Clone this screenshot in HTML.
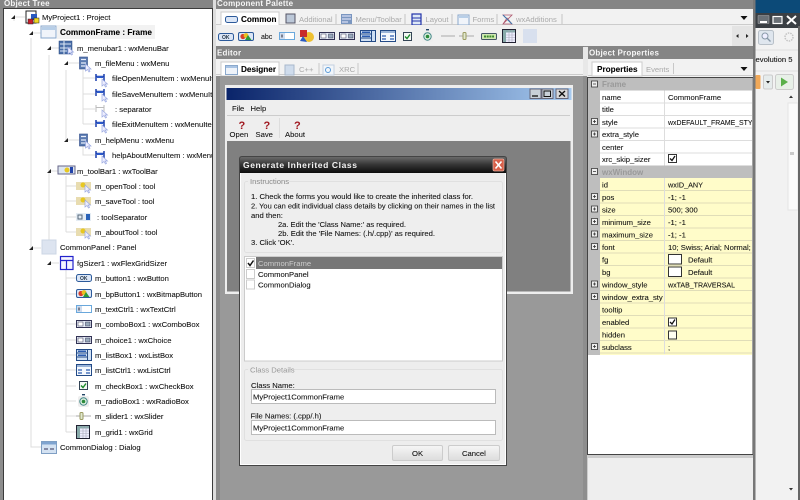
<!DOCTYPE html>
<html><head><meta charset="utf-8"><style>
html,body{margin:0;padding:0;background:#8c8c8c}
svg{display:block;position:absolute;left:0;top:0;filter:blur(.28px)}
text{font-family:"Liberation Sans",sans-serif;font-size:7.65px;fill:#111;stroke:#111;stroke-width:.08px;white-space:pre}
.b{font-weight:bold;font-size:8.2px;fill:#000}
.w{font-weight:bold;font-size:8px;fill:#f6f6f6;stroke:none;letter-spacing:.2px}
.g{fill:#aaa;stroke:none}
.v{font-weight:bold;fill:#999;stroke:none;font-size:8px}
</style></head><body>
<svg width="800" height="500" viewBox="0 0 800 500" xmlns="http://www.w3.org/2000/svg">
<defs>
<linearGradient id="tb"><stop offset="0" stop-color="#0a246a"/><stop offset="1" stop-color="#a6caf0"/></linearGradient>
<linearGradient id="dt" x2="0" y2="1"><stop offset="0" stop-color="#6a6a6a"/><stop offset=".5" stop-color="#333"/><stop offset="1" stop-color="#0c0c0c"/></linearGradient>
<linearGradient id="btn" x2="0" y2="1"><stop offset="0" stop-color="#f6f6f6"/><stop offset="1" stop-color="#dcdcdc"/></linearGradient>
<clipPath id="ct"><rect x="4" y="9" width="208" height="491"/></clipPath>
<clipPath id="cv"><rect x="664" y="77" width="88" height="378"/></clipPath>
<g id="cur"><path d="M0 0v7l2-1.500 1.500 2.500 1-.6L3.200 5H5.500z" fill="#eef" stroke="#99a8e0" stroke-width=".7"/></g>
<g id="mi"><path d="M0 1v7M8 1v7M0 3.500h8" fill="none" stroke="#1a3fae" stroke-width="1.500"/><rect x="1" y="3" width="6" height="2" fill="#2b58c8"/><use href="#cur" x="6" y="6"/></g>
<g id="sp"><path d="M0 1v7M8 1v7M0 3.500h8" fill="none" stroke="#bbb" stroke-width="1"/><use href="#cur" x="6" y="6"/></g>
<g id="mn"><rect x="0" y="0" width="8" height="12" fill="#5a7ab0" stroke="#2d4a88" stroke-width=".6"/><path d="M1.500 2.500h5M1.500 6h5M1.500 9h5" stroke="#e8eefa" stroke-width="1.200"/><use href="#cur" x="6" y="7"/></g>
<g id="tl"><rect x="0" y="1" width="15" height="8" fill="#e8dcb0"/><circle cx="7" cy="4" r="2.500" fill="#e8c820"/><use href="#cur" x="9" y="4"/></g>
<g id="ok"><rect x=".5" y=".5" width="15" height="7" rx="2" fill="#dbe6f6" stroke="#2c5a9a"/><text x="4" y="6" style="font-size:5px;font-weight:bold;fill:#234;stroke:none">OK</text></g>
<g id="bp"><rect x=".5" y=".5" width="15" height="8" rx="1.500" fill="#dbe6f6" stroke="#2c5a9a"/><circle cx="5" cy="4.500" r="2.600" fill="#d8402a"/><circle cx="8" cy="3.500" r="2.400" fill="#e8c020"/><path d="M7 8l3-5 3.500 5z" fill="#2a9a3a"/></g>
<g id="tx"><rect x=".5" y=".5" width="15" height="7" fill="#fff" stroke="#6aa8dc"/><rect x="1" y="1" width="5" height="6" fill="#cfdcee"/><path d="M3 2.500v3" stroke="#223"/></g>
<g id="cb"><rect x=".5" y=".5" width="15" height="7" fill="#e8eef8" stroke="#335"/><rect x="2" y="2" width="5" height="4" fill="#fff" stroke="#335" stroke-width=".5"/><rect x="9.500" y="2" width="4.500" height="4" fill="#9ab" stroke="#335" stroke-width=".5"/></g>
<g id="lb"><rect x=".5" y=".5" width="15" height="11" fill="#cfe0f4" stroke="#234a86"/><path d="M1 4h10M1 8h10M11.500 1v10" stroke="#234a86"/><rect x="2" y="1.500" width="8" height="1.500" fill="#2a5cb0"/><rect x="2" y="5.500" width="8" height="1.500" fill="#2a5cb0"/></g>
<g id="lc"><rect x=".5" y=".5" width="15" height="11" fill="#f4f8fd" stroke="#234a86"/><rect x="1" y="1" width="14" height="2" fill="#9ab4d8"/><path d="M2 6h4M10 6h4M2 9h4M10 9h4" stroke="#2a5cb0" stroke-width="1.200"/></g>
<g id="ck"><rect x=".5" y=".5" width="8" height="8" fill="#f4f8f4" stroke="#345"/><path d="M2 4.500l2 2 3-4" fill="none" stroke="#1a8a2a" stroke-width="1.400"/></g>
<g id="rd"><rect x="0" y="2" width="11" height="11" rx="2" fill="#eee"/><circle cx="5.500" cy="7.500" r="3.700" fill="#dff0e0" stroke="#488"/><circle cx="5.500" cy="7.500" r="1.800" fill="#2a8a3a"/><rect x="4" y="0" width="3" height="1.400" fill="#246"/></g>
<g id="sl"><path d="M0 5h15" stroke="#aaa"/><rect x="4" y="1.500" width="3" height="7" rx="1" fill="#e0e8d0" stroke="#9a9a60"/></g>
<g id="gr"><rect x=".5" y=".5" width="13" height="13" fill="#eef" stroke="#223"/><rect x="1" y="1" width="12" height="2.500" fill="#8aa"/><rect x="1" y="1" width="3" height="12" fill="#8aa"/><path d="M4 6h9M4 8.500h9M4 11h9M7 1v12M10 1v12" stroke="#aab" stroke-width=".6"/></g>
<g id="dg"><rect x=".5" y=".5" width="15" height="12" fill="#d4e2f2" stroke="#7f9fc4"/><rect x="1" y="1" width="14" height="2.500" fill="#7fa4d0"/><path d="M3 8h4M9 8h4" stroke="#557" stroke-width="1.200"/></g>
<path id="bx" d="M.5 .5h6v6h-6zM2 3.500h3M3.500 2v3" fill="#eee" stroke="#333" stroke-width=".8"/>
<path id="mx" d="M.5 .5h6v6h-6zM2 3.500h3" fill="#eee" stroke="#333" stroke-width=".8"/>
</defs>

<rect width="800" height="500" fill="#8c8c8c"/>
<!-- left panel -->
<rect x="0" y="0" width="216" height="9" fill="#858585"/>
<rect x="0" y="9" width="3" height="491" fill="#8d8d8d"/>
<rect x="3" y="8" width="210" height="492" fill="#3c3c3c"/>
<rect x="4" y="9" width="208" height="491" fill="#fff"/>
<rect x="213" y="0" width="3" height="500" fill="#ddd"/>
<text x="4" y="6" class="w">Object Tree</text>

<!-- tree lines -->
<path d="M14 21V17H25M31 38V447H41M31 33H41M49 55V248M49 48H59M49 171H59M49 263H59M66 70V140M66 63H79M66 140H79M83 70V124M83 78H95M83 94H95M83 109H95M83 124H95M83 146V155H95M66 176V232M66 186H76M66 201H76M66 217H76M66 232H76M31 248H41M66 270V432M66 278H76M66 294H76M66 309H76M66 324H76M66 340H76M66 355H76M66 370H76M66 386H76M66 401H76M66 416H76M66 432H76" fill="none" stroke="#dcdcdc" stroke-width="1"/>
<g fill="#222"><path d="M11 19l4-4v4zM29 35l4-4v4zM47 50l4-4v4zM64 65l4-4v4zM64 142l4-4v4zM47 173l4-4v4zM29 250l4-4v4zM47 265l4-4v4z"/></g>

<!-- tree icons -->
<g>
<rect x="26" y="11" width="10" height="12" fill="#fff" stroke="#222"/><rect x="31" y="14" width="6" height="6" fill="#2a5ac0"/><rect x="28" y="19" width="5" height="5" fill="#c81e2a" stroke="#222" stroke-width=".5"/><rect x="34" y="18" width="5" height="5" fill="#f0d820" stroke="#222" stroke-width=".5"/>
<rect x="59" y="41" width="13" height="13" fill="#4a6ea8" stroke="#2a4a80" stroke-width=".5"/><path d="M60 44h11M60 48h11M60 51h7M64 41v13" stroke="#dde8f6" stroke-width="1"/><use href="#cur" x="68" y="47"/>
<use href="#mn" x="79.500" y="57"/><use href="#mn" x="79.500" y="134"/>
<use href="#mi" x="96" y="73"/><use href="#mi" x="96" y="88"/><use href="#sp" x="96" y="104"/><use href="#mi" x="96" y="119"/><use href="#mi" x="96" y="150"/>
<rect x="58" y="166" width="17" height="8" fill="#dde6f0" stroke="#668"/><circle cx="67" cy="170" r="2.500" fill="#e8c820"/><rect x="70" y="167" width="3" height="6" fill="#2244aa"/>
<use href="#tl" x="76" y="181"/><use href="#tl" x="76" y="196"/>
<rect x="76" y="213" width="15" height="8" fill="#e4ecf4"/><path d="M78 215h4v4h-4z" fill="none" stroke="#567"/><rect x="86" y="214" width="4" height="6" fill="#2a62b8"/>
<use href="#tl" x="76" y="227"/>
<rect x="42" y="240" width="14" height="14" fill="#dde4f0" stroke="#ccd6e4"/>
<rect x="60.500" y="256.500" width="12.500" height="13" fill="#f4f4ff" stroke="#2222cc" stroke-width="1.200"/><path d="M60 260.500h13M66.500 260v9" stroke="#2222cc" stroke-width="1.200"/>
<use href="#ok" x="76" y="274"/><use href="#bp" x="76" y="289"/><use href="#tx" x="76" y="305"/><use href="#cb" x="76" y="320"/><use href="#cb" x="76" y="336"/>
<use href="#lb" x="76" y="349"/><use href="#lc" x="76" y="364"/><use href="#ck" x="79" y="381"/><use href="#rd" x="78" y="394"/><use href="#sl" x="76" y="411"/><use href="#gr" x="76" y="425"/>
<use href="#dg" x="41" y="441"/>
</g>
<rect x="57" y="25" width="98" height="14" fill="#f2f2f2"/>
<rect x="41" y="26" width="15" height="12" fill="#f0f4fa" stroke="#8aa8cc"/><rect x="42" y="27" width="13" height="3" fill="#b8cfe8"/>
<g clip-path="url(#ct)">
<text x="42" y="20">MyProject1 : Project</text>
<text x="60" y="35" class="b">CommonFrame : Frame</text>
<text x="77" y="51">m_menubar1 : wxMenuBar</text>
<text x="95" y="66">m_fileMenu : wxMenu</text>
<text x="112" y="81">fileOpenMenuItem : wxMenuItem</text>
<text x="112" y="97">fileSaveMenuItem : wxMenuItem</text>
<text x="115" y="112">: separator</text>
<text x="112" y="127">fileExitMenuItem : wxMenuItem</text>
<text x="95" y="143">m_helpMenu : wxMenu</text>
<text x="112" y="158">helpAboutMenuItem : wxMenuItem</text>
<text x="77" y="174">m_toolBar1 : wxToolBar</text>
<text x="95" y="189">m_openTool : tool</text>
<text x="95" y="204">m_saveTool : tool</text>
<text x="97" y="220">: toolSeparator</text>
<text x="95" y="235">m_aboutTool : tool</text>
<text x="60" y="250">CommonPanel : Panel</text>
<text x="77" y="266">fgSizer1 : wxFlexGridSizer</text>
<text x="95" y="281">m_button1 : wxButton</text>
<text x="95" y="297">m_bpButton1 : wxBitmapButton</text>
<text x="95" y="312">m_textCtrl1 : wxTextCtrl</text>
<text x="95" y="327">m_comboBox1 : wxComboBox</text>
<text x="95" y="343">m_choice1 : wxChoice</text>
<text x="95" y="358">m_listBox1 : wxListBox</text>
<text x="95" y="373">m_listCtrl1 : wxListCtrl</text>
<text x="95" y="389">m_checkBox1 : wxCheckBox</text>
<text x="95" y="404">m_radioBox1 : wxRadioBox</text>
<text x="95" y="419">m_slider1 : wxSlider</text>
<text x="95" y="435">m_grid1 : wxGrid</text>
<text x="60" y="450">CommonDialog : Dialog</text>
</g>

<!-- palette -->
<rect x="216" y="0" width="539" height="9" fill="#858585"/>
<text x="217" y="6" class="w">Component Palette</text>
<rect x="216" y="9" width="539" height="16" fill="#f2f2f2"/>
<path d="M216 24.500h539" stroke="#ccc"/>
<rect x="221" y="12" width="58" height="14" fill="#fff" stroke="#ccc"/>
<rect x="225.500" y="16.500" width="12" height="6" rx="2" fill="#dbe6f6" stroke="#2c5a9a"/>
<text x="241" y="22" class="b">Common</text>
<rect x="286" y="14" width="9" height="9" fill="#bcc8d8" stroke="#556"/>
<text x="299" y="22" class="g">Additional</text>
<rect x="341" y="14" width="11" height="10" fill="#7a96c0"/><path d="M342 16h9M342 19h9M342 22h6" stroke="#eef"/>
<text x="355.500" y="22" class="g">Menu/Toolbar</text>
<rect x="412" y="14" width="9" height="11" fill="#dde8f6" stroke="#2233aa" stroke-width="1.200"/><path d="M412 18h9M412 21h9" stroke="#2233aa"/>
<text x="425.500" y="22" class="g">Layout</text>
<rect x="458" y="15" width="11" height="10" fill="#f0f4fa" stroke="#8aa8cc"/><rect x="459" y="16" width="9" height="2" fill="#b8cfe8"/>
<text x="472.500" y="22" class="g">Forms</text>
<path d="M503 15h9l-9 9h9zM503 24l4-6 5 6" fill="none" stroke="#b05a70" stroke-width=".8"/><path d="M503 15l9 9" stroke="#3a7ab0"/>
<text x="516" y="22" class="g">wxAdditions</text>
<path d="M336 14v10M405 14v10M452 14v10M497 14v10M562 14v10" stroke="#c4c4c4"/>
<path d="M740.500 16h7l-3.500 4z" fill="#111"/>
<rect x="216" y="25" width="539" height="21" fill="#f0f0f0"/>
<rect x="732" y="26" width="23" height="20" fill="#e4e4e4"/>
<path d="M738.500 34v4l-2.500-2zM746 34v4l2.500-2z" fill="#222"/>
<use href="#ok" x="218" y="33"/><use href="#bp" x="238" y="32"/>
<text x="261" y="39" style="font-size:7px">abc</text>
<use href="#tx" x="279" y="32"/>
<circle cx="309" cy="37" r="5" fill="#eec030"/><rect x="300" y="30" width="7" height="7" fill="#c82a2a"/><path d="M300 41l3-5 4 6z" fill="#2a5ac0"/>
<use href="#cb" x="319" y="32"/><use href="#cb" x="339" y="32"/><use href="#lb" x="360" y="30"/><use href="#lc" x="380" y="30"/><use href="#ck" x="403" y="32"/><use href="#rd" x="422" y="29"/>
<path d="M441 36h14" stroke="#aaa"/><use href="#sl" x="459" y="31"/>
<rect x="481.500" y="33.500" width="15" height="6" rx="1" fill="#cfe8b0" stroke="#456"/><path d="M484 36.500h10" stroke="#3a8a2a" stroke-width="2" stroke-dasharray="2 .7"/>
<use href="#gr" x="502" y="29"/>
<rect x="523" y="29" width="14" height="14" fill="#d8e0ee"/>

<!-- editor -->
<rect x="216" y="46" width="368" height="13" fill="#858585"/>
<text x="217" y="55.500" class="w">Editor</text>
<rect x="216" y="59" width="368" height="17" fill="#f2f2f2"/>
<path d="M216 74.500h368" stroke="#ccc"/>
<rect x="221" y="62" width="58" height="14" fill="#fff" stroke="#ccc"/>
<rect x="225.500" y="65.500" width="12" height="9" fill="#eef3fa" stroke="#8aa8cc"/><rect x="226" y="66" width="11" height="2" fill="#a9c4e4"/>
<text x="241" y="72" class="b">Designer</text>
<rect x="285" y="65" width="9" height="10" fill="#cfdcec" stroke="#a8b8cc"/>
<text x="299" y="72" class="g">C++</text>
<path d="M319 63v11M358 63v11" stroke="#c8c8c8"/>
<rect x="323" y="65" width="11" height="10" fill="#f2f6fa" stroke="#c4d0e0"/><circle cx="328" cy="70" r="2.500" fill="none" stroke="#5a9ad8"/>
<text x="339" y="72" class="g">XRC</text>
<rect x="216" y="76" width="368" height="424" fill="#999"/>
<rect x="216" y="76" width="4" height="424" fill="#8a8a8a"/>
<rect x="583" y="47" width="5" height="453" fill="#e8e8e8"/>
<rect x="583" y="76" width="4" height="424" fill="#8e8e8e"/>

<!-- designer frame -->
<rect x="225" y="85" width="348" height="209" fill="#eee"/>
<rect x="226.500" y="88" width="345" height="12" fill="url(#tb)"/>
<rect x="530" y="89" width="11" height="9.500" fill="#c8d0d8" stroke="#667"/><path d="M532 96h6" stroke="#111" stroke-width="1.300"/>
<rect x="542" y="89" width="11" height="9.500" fill="#c8d0d8" stroke="#667"/><rect x="544" y="91" width="6.500" height="5.500" fill="none" stroke="#111"/>
<rect x="556" y="89" width="12" height="9.500" fill="#d8d8d8" stroke="#667"/><path d="M559 91l6 5.500M565 91l-6 5.500" stroke="#111" stroke-width="1.400"/>
<text x="232" y="111">File</text><text x="250.500" y="111">Help</text>
<path d="M227 115.500h343" stroke="#ccc"/>
<path d="M279.500 118v20" stroke="#ddd"/>
<text x="238.500" y="129" style="font-size:11px;font-weight:bold;fill:#a01820;stroke:none">?</text>
<text x="263.500" y="129" style="font-size:11px;font-weight:bold;fill:#a01820;stroke:none">?</text>
<text x="294" y="129" style="font-size:11px;font-weight:bold;fill:#a01820;stroke:none">?</text>
<text x="229.500" y="137">Open</text><text x="255.500" y="137">Save</text><text x="285" y="137">About</text>
<rect x="227" y="141" width="343.500" height="150.500" fill="#808080"/>

<!-- properties -->
<rect x="588" y="46" width="167" height="13" fill="#858585"/>
<text x="589" y="55.500" class="w">Object Properties</text>
<rect x="588" y="59" width="167" height="18" fill="#f2f2f2"/>
<path d="M588 75.500h165" stroke="#ccc"/>
<rect x="592" y="62" width="50" height="14" fill="#fff" stroke="#ccc"/>
<text x="597" y="72" class="b">Properties</text>
<text x="646" y="72" class="g">Events</text>
<path d="M673.500 63v11" stroke="#c8c8c8"/>
<path d="M740.500 67h7l-3.500 4z" fill="#111"/>
<rect x="587.500" y="77.500" width="165.500" height="377" fill="#fff" stroke="#444"/>
<rect x="588" y="78" width="12" height="277" fill="#bebebe"/>
<rect x="600" y="90" width="152" height="75" fill="#fff"/>
<rect x="600" y="178" width="152" height="177" fill="#fffcc9"/>
<rect x="588" y="78" width="164" height="12.500" fill="#bebebe"/>
<rect x="588" y="165.500" width="164" height="12.500" fill="#bebebe"/>
<path d="M600 103h152M600 115.500h152M600 128h152M600 140.500h152M600 153h152" stroke="#ddd"/>
<path d="M600 190.500h152M600 203h152M600 215.500h152M600 228h152M600 240.500h152M600 253h152M600 265.500h152M600 278h152M600 290.500h152M600 303h152M600 315.500h152M600 328h152M600 340.500h152M600 353h152" stroke="#e0ddb8"/>
<path d="M664.500 90.500v75M664.500 178v176" stroke="#ddd"/>
<use href="#mx" x="591" y="80.500"/><use href="#mx" x="591" y="168"/>
<use href="#bx" x="591" y="118"/><use href="#bx" x="591" y="130.500"/><use href="#bx" x="591" y="193"/><use href="#bx" x="591" y="205.500"/><use href="#bx" x="591" y="218"/><use href="#bx" x="591" y="230.500"/><use href="#bx" x="591" y="243"/><use href="#bx" x="591" y="280.500"/><use href="#bx" x="591" y="293"/><use href="#bx" x="591" y="343"/>
<text x="602" y="87" class="v">Frame</text>
<text x="602" y="100">name</text><text x="602" y="112">title</text><text x="602" y="125">style</text><text x="602" y="137">extra_style</text><text x="602" y="150">center</text><text x="602" y="162">xrc_skip_sizer</text>
<text x="602" y="175" class="v">wxWindow</text>
<text x="602" y="187.500">id</text><text x="602" y="200">pos</text><text x="602" y="212.500">size</text><text x="602" y="225">minimum_size</text><text x="602" y="237.500">maximum_size</text><text x="602" y="250">font</text><text x="602" y="262.500">fg</text><text x="602" y="275">bg</text><text x="602" y="287.500">window_style</text>
<text x="602" y="300">window_extra_sty</text><text x="602" y="312.500">tooltip</text><text x="602" y="325">enabled</text><text x="602" y="337.500">hidden</text><text x="602" y="350">subclass</text>
<g clip-path="url(#cv)">
<text x="668" y="100">CommonFrame</text>
<text x="668" y="125" textLength="93" lengthAdjust="spacingAndGlyphs">wxDEFAULT_FRAME_STYLE</text>
<text x="668" y="187.500" textLength="35" lengthAdjust="spacingAndGlyphs">wxID_ANY</text><text x="668" y="200">-1; -1</text><text x="668" y="212.500">500; 300</text><text x="668" y="225">-1; -1</text><text x="668" y="237.500">-1; -1</text>
<text x="668" y="250">10; Swiss; Arial; Normal; Normal</text>
<text x="688" y="262.500">Default</text><text x="688" y="275">Default</text>
<text x="668" y="287.500" textLength="67" lengthAdjust="spacingAndGlyphs">wxTAB_TRAVERSAL</text><text x="668" y="350">;</text>
</g>
<rect x="668.500" y="154.500" width="8" height="8" fill="#fff" stroke="#333"/><path d="M670 158.500l2 2 3-4.500" fill="none" stroke="#111" stroke-width="1.300"/>
<rect x="668.500" y="254.500" width="13" height="9.500" fill="#fff" stroke="#333"/>
<rect x="668.500" y="267" width="13" height="9.500" fill="#fff" stroke="#333"/>
<rect x="668.500" y="318" width="8" height="8" fill="#fff" stroke="#333"/><path d="M670 322l2 2 3-4.500" fill="none" stroke="#111" stroke-width="1.300"/>
<rect x="668.500" y="331" width="8" height="8" fill="#fffff0" stroke="#333"/>
<rect x="587" y="455" width="168" height="45" fill="#ccc"/>
<rect x="588" y="458" width="165" height="42" fill="#eee"/>

<!-- right window -->
<rect x="753" y="0" width="2.500" height="500" fill="#777"/>
<rect x="755.500" y="0" width="44.500" height="500" fill="#f2f2f2"/>
<rect x="755.500" y="0" width="44.500" height="13" fill="#0c4a78"/>
<rect x="755.500" y="13" width="44.500" height="15" fill="#3a3f44"/>
<path d="M758 15.500h11v8h-11z" fill="#6a7076" stroke="#aaa" stroke-width=".5"/><path d="M760 22h7" stroke="#fff" stroke-width="2"/>
<rect x="773" y="16.500" width="9" height="7" fill="#6a7076" stroke="#fff" stroke-width="1.200"/>
<path d="M787 16l9 8M796 16l-9 8" stroke="#fff" stroke-width="2"/>
<rect x="758.500" y="30.500" width="15" height="14" rx="2" fill="#dfe6ee" stroke="#b8c0c8"/>
<circle cx="765" cy="36" r="3" fill="#eef" stroke="#8898a8"/><path d="M767 38l3.500 3.500" stroke="#8898a8" stroke-width="1.300"/>
<circle cx="789" cy="37" r="4" fill="none" stroke="#c4c4c4" stroke-width="1.500" stroke-dasharray="1.500 1"/>
<path d="M755.500 50h44M755.500 71h44" stroke="#ddd"/>
<text x="755.500" y="62">evolution 5</text>
<rect x="755.500" y="75" width="5" height="14" rx="1" fill="#f0a858"/>
<rect x="763.500" y="75" width="9" height="14" rx="1.500" fill="#e6ecec" stroke="#ccc"/><path d="M766 81h4l-2 2.500z" fill="#222"/>
<rect x="775.500" y="74.500" width="18" height="15" rx="2" fill="#e8f0e8" stroke="#ccc"/><path d="M781 77.500v9l7-4.500z" fill="#5ab04a"/>
<path d="M789 98h4l-2-2.500z" fill="#333"/>
<rect x="788" y="103" width="10" height="107" fill="#fafafa" stroke="#e4e4e4"/>
<path d="M789 488h4l-2 2.500z" fill="#333"/>
<path d="M791 152v3M793 152v3" stroke="#999"/>
<rect x="798" y="26" width="2" height="474" fill="#666"/>

<!-- dialog -->
<path d="M239 159q0-3 3-3h262q3 0 3 3v307h-268z" fill="#444"/>
<path d="M240 159q0-2 2-2h262q2 0 2 2v14h-266z" fill="url(#dt)"/>
<rect x="240" y="173" width="266" height="292" fill="#fff"/>
<rect x="241" y="173" width="264" height="291" fill="#ededed"/>
<text x="243" y="168" style="font-weight:bold;font-size:8.500px;fill:#f4f4f4;stroke:none;letter-spacing:.6px">Generate Inherited Class</text>
<rect x="493" y="159" width="11" height="12" rx="1.500" fill="#d8604a" stroke="#e8b0a0" stroke-width=".7"/><path d="M495.500 161.500l6 7M501.500 161.500l-6 7" stroke="#fff" stroke-width="1.600"/>
<rect x="244.500" y="181.500" width="258" height="71" rx="2" fill="#eee" stroke="#e0e0e0"/>
<rect x="248" y="178" width="41" height="7" fill="#ededed"/>
<text x="250" y="184" style="fill:#888;stroke:none">Instructions</text>
<text x="251" y="199" textLength="222" lengthAdjust="spacingAndGlyphs">1. Check the forms you would like to create the inherited class for.</text>
<text x="251" y="208.500" textLength="244" lengthAdjust="spacingAndGlyphs">2. You can edit individual class details by clicking on their names in the list</text>
<text x="251" y="218">and then:</text>
<text x="278" y="227" textLength="128" lengthAdjust="spacingAndGlyphs">2a. Edit the 'Class Name:' as required.</text>
<text x="278" y="236" textLength="157" lengthAdjust="spacingAndGlyphs">2b. Edit the 'File Names: (.h/.cpp)' as required.</text>
<text x="251" y="245">3. Click 'OK'.</text>
<rect x="244.500" y="256.500" width="258" height="104.500" fill="#fff" stroke="#ccc"/>
<rect x="256" y="257" width="246" height="12" fill="#777"/>
<rect x="246.500" y="258.500" width="8" height="9" fill="#fff" stroke="#ccc"/><path d="M248 263l2 2.500 3.500-5" fill="none" stroke="#111" stroke-width="1.500"/>
<rect x="246.500" y="269.500" width="8" height="9" fill="#fff" stroke="#ccc"/>
<rect x="246.500" y="280" width="8" height="9" fill="#fff" stroke="#ccc"/>
<text x="258" y="266" style="fill:#ccc;stroke:none">CommonFrame</text>
<text x="258" y="277">CommonPanel</text>
<text x="258" y="287.500">CommonDialog</text>
<rect x="244.500" y="369.500" width="258" height="71" rx="2" fill="#eee" stroke="#e0e0e0"/>
<rect x="248" y="366" width="41" height="7" fill="#ededed"/>
<text x="250" y="372.500" style="fill:#999;stroke:none">Class Details</text>
<text x="251" y="388">Class Name:</text>
<rect x="251.500" y="389.500" width="244" height="14" fill="#fff" stroke="#bbb"/>
<text x="253" y="399.500">MyProject1CommonFrame</text>
<text x="250.500" y="418.500">File Names: (.cpp/.h)</text>
<rect x="251.500" y="420.500" width="244" height="14" fill="#fff" stroke="#bbb"/>
<text x="253" y="430.500">MyProject1CommonFrame</text>
<rect x="392.500" y="445.500" width="50" height="15" rx="1.500" fill="url(#btn)" stroke="#ccc"/>
<rect x="448.500" y="445.500" width="51" height="15" rx="1.500" fill="url(#btn)" stroke="#ccc"/>
<text x="412" y="456">OK</text><text x="462" y="456">Cancel</text>
</svg>
</body></html>
